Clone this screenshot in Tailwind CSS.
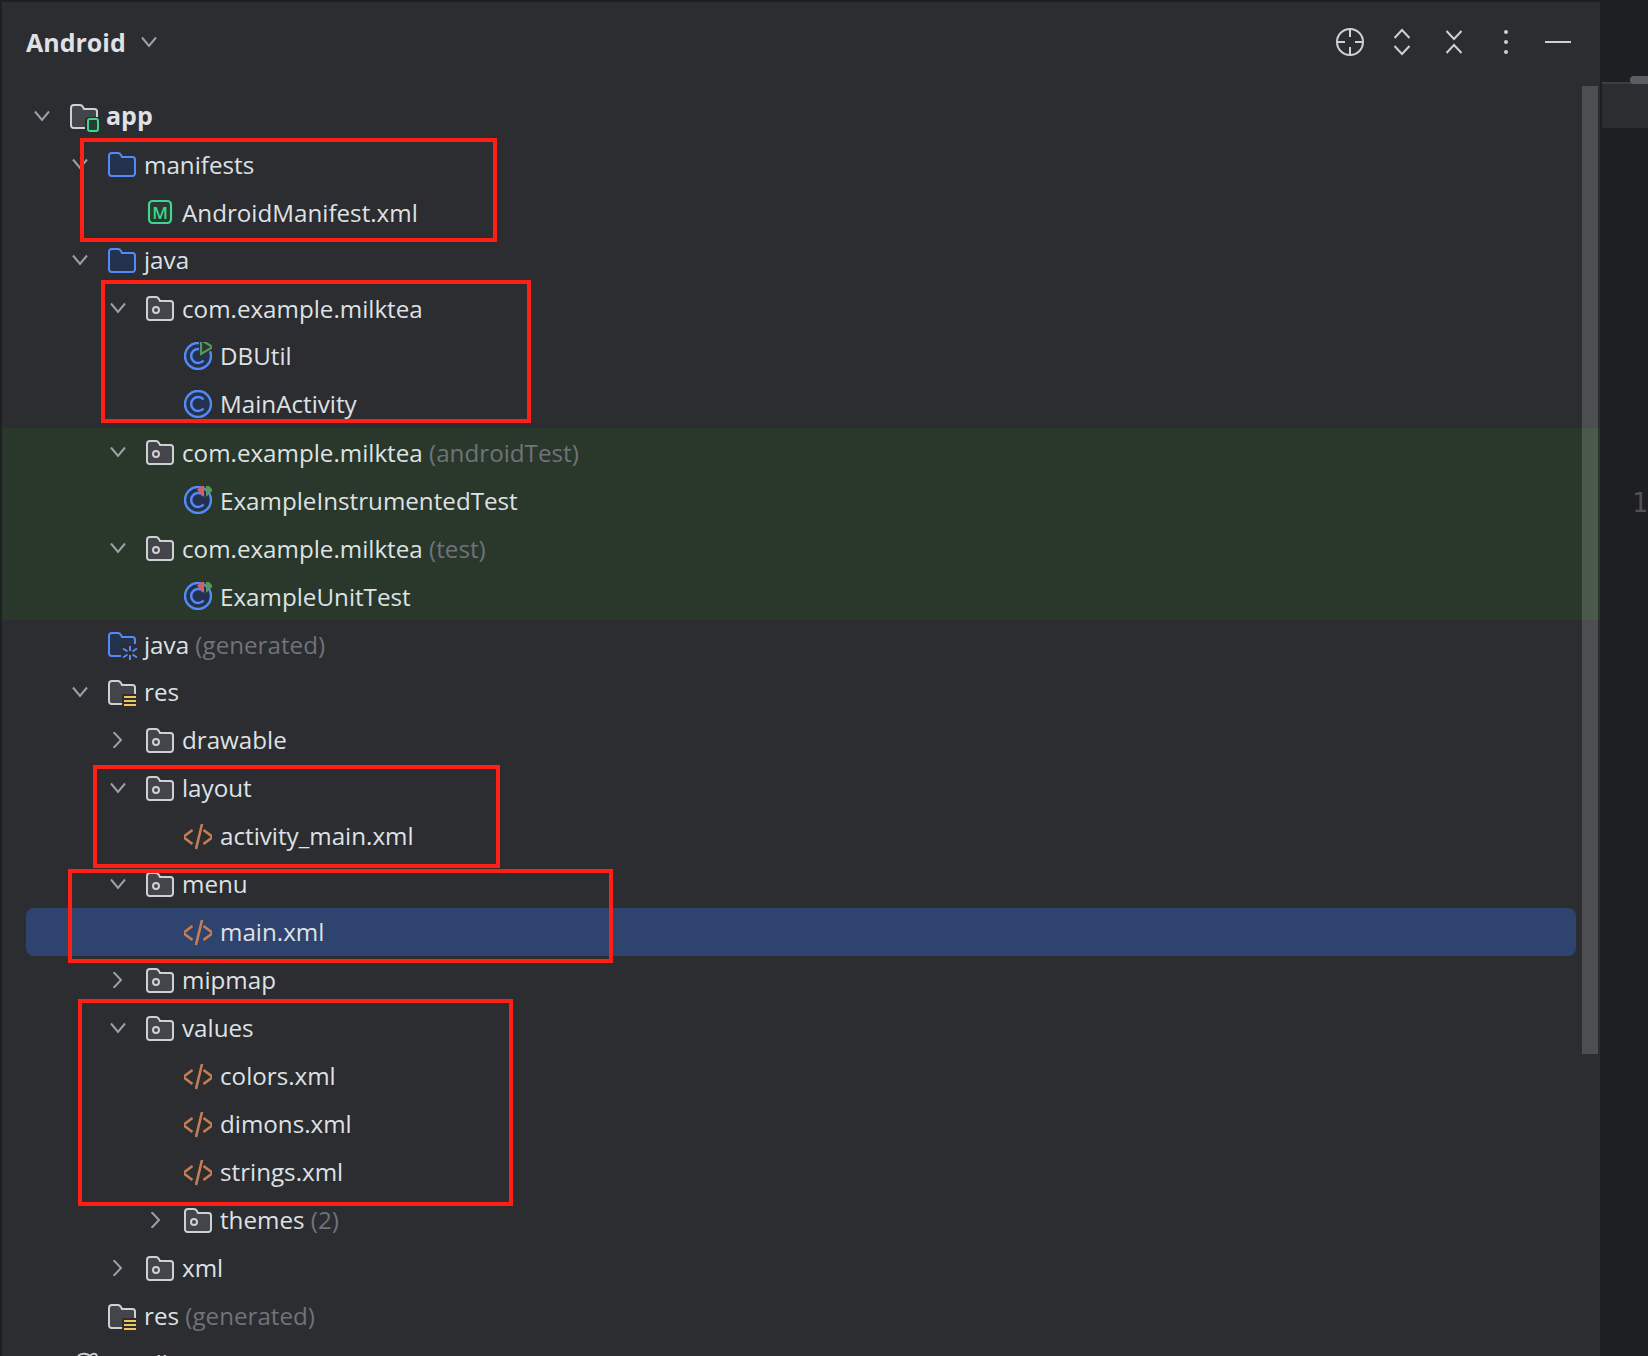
<!doctype html>
<html lang="en">
  <head>
    <meta charset="UTF-8" />
    <title>Project</title>
    <script src="https://cdn.jsdelivr.net/npm/@tailwindcss/browser@4"></script>
  </head>
  <body class="relative h-[1356px] w-[1648px] overflow-hidden bg-[#1e1f22] font-['Open_Sans',sans-serif] text-[24.2px] text-[#dfe1e5]">
    <svg class="hidden">
      <symbol id="chev-down" viewBox="0 0 16 16" overflow="visible"><path d="M1 3.500 8 12 15 3.500" fill="none" stroke="#9da0a8" stroke-width="2" /></symbol>
      <symbol id="chev-right" viewBox="0 0 16 16" overflow="visible"><path d="M3.500 0 11 8 3.500 16" fill="none" stroke="#9da0a8" stroke-width="2" /></symbol>
      <symbol id="folder-blue" viewBox="0 0 28 28" overflow="visible"><path d="M4 3H10C11 3 12 3.500 13 5L14 7H24.500A2.500 2.500 0 0 1 27 9.500V23.500A2.500 2.500 0 0 1 24.500 26H3.500A2.500 2.500 0 0 1 1 23.500V6A3 3 0 0 1 4 3Z" fill="#25324d" stroke="#548af7" stroke-width="2" /></symbol>
      <symbol id="folder-gray" viewBox="0 0 28 28" overflow="visible"><path d="M4 3H10C11 3 12 3.500 13 5L14 7H24.500A2.500 2.500 0 0 1 27 9.500V23.500A2.500 2.500 0 0 1 24.500 26H3.500A2.500 2.500 0 0 1 1 23.500V6A3 3 0 0 1 4 3Z" fill="#43454a" stroke="#ced0d6" stroke-width="2" /></symbol>
      <symbol id="package" viewBox="0 0 28 28" overflow="visible"><use href="#folder-gray" width="28" height="28" /><circle cx="10" cy="16" r="3" fill="none" stroke="#ced0d6" stroke-width="2" /></symbol>
      <symbol id="class" viewBox="0 0 28 28" overflow="visible"><circle cx="14" cy="14" r="13" fill="#25324d" stroke="#548af7" stroke-width="2.500" /><path d="M19.500 9.500A7 7 0 1 0 19.500 18.500" fill="none" stroke="#548af7" stroke-width="2.500" /></symbol>
      <symbol id="class-run" viewBox="0 0 28 28" overflow="visible"><use href="#class" width="28" height="28" /><path d="M16.500 -3 30 5 16.500 13Z" fill="#2b3a2d" stroke="#2b2d30" stroke-width="3" /><path d="M17 -2 29 5 17 12Z" fill="#2b3a2d" stroke="#57965c" stroke-width="2.200" /></symbol>
      <symbol id="class-test" viewBox="0 0 28 28" overflow="visible"><use href="#class" width="28" height="28" /><path d="M20 -3 13 4 20 11Z" fill="#db5c5c" /><path d="M22 -3 29 4 22 11Z" fill="#57965c" /></symbol>
      <symbol id="xml" viewBox="0 0 28 28" overflow="visible"><path d="M8.500 8 -1 15 8.500 22M19.500 8 29 15 19.500 22M18 2 12 27" fill="none" stroke="#c77d55" stroke-width="2.600" /></symbol>
      <symbol id="manifest" viewBox="0 0 28 28" overflow="visible"><rect x="3" y="3" width="22" height="22" rx="3.500" fill="#2a3a33" stroke="#3dd68c" stroke-width="2.200" /><text x="14" y="20.500" text-anchor="middle" font-size="17" font-weight="600" fill="#3dd68c">M</text></symbol>
      <symbol id="yellow-lines" viewBox="0 0 28 28" overflow="visible"><rect x="14" y="16" width="18" height="16" fill="#2b2d30" /><path d="M16 19H30M16 23H30M16 27H30" stroke="#f2c55c" stroke-width="2" /></symbol>
    </svg>

    <!-- tool window -->
    <div class="absolute top-[2px] bottom-0 left-[2px] w-[1598px] overflow-hidden bg-[#2b2d30]">
      <header class="flex h-[80px] items-center justify-between pr-4 pl-6">
        <div class="flex items-center gap-[15px]">
          <span class="translate-y-[1px] text-[25px] font-bold">Android</span>
          <svg class="h-4 w-4"><use href="#chev-down" /></svg>
        </div>
        <div class="flex items-center text-[#ced0d6]">
          <button class="flex w-[52px] justify-center">
            <svg class="h-7 w-7" viewBox="0 0 28 28" fill="none" stroke="#ced0d6" stroke-width="2"><circle cx="14" cy="14" r="13" /><path d="M14 1V9M14 19V27M1 14H9M19 14H27" /></svg>
          </button>
          <button class="flex w-[52px] justify-center">
            <svg class="h-7 w-4" viewBox="0 0 16 28" fill="none" stroke="#ced0d6" stroke-width="2"><path d="M0.500 10 8 2 15.500 10M0.500 18 8 26 15.500 18" /></svg>
          </button>
          <button class="flex w-[52px] justify-center">
            <svg class="h-7 w-4" viewBox="0 0 16 28" fill="none" stroke="#ced0d6" stroke-width="2"><path d="M0.500 3 8 11 15.500 3M0.500 25 8 17 15.500 25" /></svg>
          </button>
          <button class="flex w-[52px] justify-center">
            <svg class="h-7 w-1" viewBox="0 0 4 28" fill="#ced0d6"><circle cx="2" cy="4" r="2" /><circle cx="2" cy="14" r="2" /><circle cx="2" cy="24" r="2" /></svg>
          </button>
          <button class="flex w-[52px] justify-center">
            <span class="h-[2px] w-[26px] bg-[#ced0d6]"></span>
          </button>
        </div>
      </header>

      <ul class="mt-[10px] flex flex-col">
        <li class="flex h-12 items-center pl-[32px]">
          <svg class="mr-5 h-4 w-4"><use href="#chev-down" /></svg>
          <span class="relative mr-2 h-7 w-7">
            <svg class="h-7 w-7"><use href="#folder-gray" /></svg>
            <span class="absolute top-[15px] left-[15px] h-[17px] w-[15px] rounded-[3px] bg-[#2b2d30]"></span>
            <span class="absolute top-[16px] left-[17px] h-[14px] w-[12px] rounded-[3px] border-2 border-[#3dd68c] bg-[#2b3a33]"></span>
          </span>
          <span class="text-[25px] font-bold">app</span>
        </li>
        <li class="flex h-12 items-center pl-[70px]">
          <svg class="mr-5 h-4 w-4"><use href="#chev-down" /></svg>
          <svg class="mr-2 h-7 w-7"><use href="#folder-blue" /></svg>
          <span class="translate-y-[1px]">manifests</span>
        </li>
        <li class="flex h-12 items-center pl-[144px]">
          <svg class="mr-2 h-7 w-7"><use href="#manifest" /></svg>
          <span class="translate-y-[1px]">AndroidManifest.xml</span>
        </li>
        <li class="flex h-12 items-center pl-[70px]">
          <svg class="mr-5 h-4 w-4"><use href="#chev-down" /></svg>
          <svg class="mr-2 h-7 w-7"><use href="#folder-blue" /></svg>
          <span>java</span>
        </li>
        <li class="flex h-12 items-center pl-[108px]">
          <svg class="mr-5 h-4 w-4"><use href="#chev-down" /></svg>
          <svg class="mr-2 h-7 w-7"><use href="#package" /></svg>
          <span class="translate-y-[1px]">com.example.milktea</span>
        </li>
        <li class="flex h-12 items-center pl-[182px]">
          <svg class="mr-2 h-7 w-7"><use href="#class-run" /></svg>
          <span>DBUtil</span>
        </li>
        <li class="flex h-12 items-center pl-[182px]">
          <svg class="mr-2 h-7 w-7"><use href="#class" /></svg>
          <span>MainActivity</span>
        </li>
        <li class="flex h-12 items-center bg-[#29382a] pl-[108px]">
          <svg class="mr-5 h-4 w-4"><use href="#chev-down" /></svg>
          <svg class="mr-2 h-7 w-7"><use href="#package" /></svg>
          <span class="translate-y-[1px]">com.example.milktea <span class="text-[#6f737a]">(androidTest)</span></span>
        </li>
        <li class="flex h-12 items-center bg-[#29382a] pl-[182px]">
          <svg class="mr-2 h-7 w-7"><use href="#class-test" /></svg>
          <span class="translate-y-[1px]">ExampleInstrumentedTest</span>
        </li>
        <li class="flex h-12 items-center bg-[#29382a] pl-[108px]">
          <svg class="mr-5 h-4 w-4"><use href="#chev-down" /></svg>
          <svg class="mr-2 h-7 w-7"><use href="#package" /></svg>
          <span class="translate-y-[1px]">com.example.milktea <span class="text-[#6f737a]">(test)</span></span>
        </li>
        <li class="flex h-12 items-center bg-[#29382a] pl-[182px]">
          <svg class="mr-2 h-7 w-7"><use href="#class-test" /></svg>
          <span class="translate-y-[1px]">ExampleUnitTest</span>
        </li>
        <li class="flex h-12 items-center pl-[106px]">
          <span class="relative mr-2 h-7 w-7">
            <svg class="h-7 w-7"><use href="#folder-blue" /></svg>
            <span class="absolute top-[14px] left-[13px] h-[18px] w-[18px] rounded-[3px] bg-[#2b2d30]"></span>
            <svg class="absolute top-[16px] left-[14px] h-[14px] w-[16px]" viewBox="0 0 16 14" fill="none" stroke="#548af7" stroke-width="2"><path d="M8 0V5M8 9V14M1 2.500 5.500 5.500M10.500 8.500 15 11.500M15 2.500 10.500 5.500M5.500 8.500 1 11.500" /></svg>
          </span>
          <span class="translate-y-[1px]">java <span class="text-[#6f737a]">(generated)</span></span>
        </li>
        <li class="flex h-12 items-center pl-[70px]">
          <svg class="mr-5 h-4 w-4"><use href="#chev-down" /></svg>
          <span class="relative mr-2 h-7 w-7">
            <svg class="h-7 w-7"><use href="#folder-gray" /></svg>
            <svg class="absolute top-0 left-0 h-7 w-7"><use href="#yellow-lines" /></svg>
          </span>
          <span>res</span>
        </li>
        <li class="flex h-12 items-center pl-[108px]">
          <svg class="mr-5 h-4 w-4"><use href="#chev-right" /></svg>
          <svg class="mr-2 h-7 w-7"><use href="#package" /></svg>
          <span>drawable</span>
        </li>
        <li class="flex h-12 items-center pl-[108px]">
          <svg class="mr-5 h-4 w-4"><use href="#chev-down" /></svg>
          <svg class="mr-2 h-7 w-7"><use href="#package" /></svg>
          <span>layout</span>
        </li>
        <li class="flex h-12 items-center pl-[182px]">
          <svg class="mr-2 h-7 w-7"><use href="#xml" /></svg>
          <span>activity_main.xml</span>
        </li>
        <li class="flex h-12 items-center pl-[108px]">
          <svg class="mr-5 h-4 w-4"><use href="#chev-down" /></svg>
          <svg class="mr-2 h-7 w-7"><use href="#package" /></svg>
          <span>menu</span>
        </li>
        <li class="mr-6 ml-6 flex h-12 items-center rounded-lg bg-[#2e436e] pl-[158px]">
          <svg class="mr-2 h-7 w-7"><use href="#xml" /></svg>
          <span>main.xml</span>
        </li>
        <li class="flex h-12 items-center pl-[108px]">
          <svg class="mr-5 h-4 w-4"><use href="#chev-right" /></svg>
          <svg class="mr-2 h-7 w-7"><use href="#package" /></svg>
          <span>mipmap</span>
        </li>
        <li class="flex h-12 items-center pl-[108px]">
          <svg class="mr-5 h-4 w-4"><use href="#chev-down" /></svg>
          <svg class="mr-2 h-7 w-7"><use href="#package" /></svg>
          <span>values</span>
        </li>
        <li class="flex h-12 items-center pl-[182px]">
          <svg class="mr-2 h-7 w-7"><use href="#xml" /></svg>
          <span>colors.xml</span>
        </li>
        <li class="flex h-12 items-center pl-[182px]">
          <svg class="mr-2 h-7 w-7"><use href="#xml" /></svg>
          <span>dimons.xml</span>
        </li>
        <li class="flex h-12 items-center pl-[182px]">
          <svg class="mr-2 h-7 w-7"><use href="#xml" /></svg>
          <span>strings.xml</span>
        </li>
        <li class="flex h-12 items-center pl-[146px]">
          <svg class="mr-5 h-4 w-4"><use href="#chev-right" /></svg>
          <svg class="mr-2 h-7 w-7"><use href="#package" /></svg>
          <span>themes <span class="text-[#6f737a]">(2)</span></span>
        </li>
        <li class="flex h-12 items-center pl-[108px]">
          <svg class="mr-5 h-4 w-4"><use href="#chev-right" /></svg>
          <svg class="mr-2 h-7 w-7"><use href="#package" /></svg>
          <span>xml</span>
        </li>
        <li class="flex h-12 items-center pl-[106px]">
          <span class="relative mr-2 h-7 w-7">
            <svg class="h-7 w-7"><use href="#folder-gray" /></svg>
            <svg class="absolute top-0 left-0 h-7 w-7"><use href="#yellow-lines" /></svg>
          </span>
          <span>res <span class="text-[#6f737a]">(generated)</span></span>
        </li>
        <li class="flex h-12 items-center pl-[68px]">
          <svg class="mr-2 h-7 w-7" viewBox="0 0 28 28" fill="none" stroke="#ced0d6" stroke-width="2"><path d="M8 6C12 2 18 4 20 6C22 3 26 3 27 6" /></svg>
          <span>Gradle Scripts</span>
        </li>
      </ul>

      <!-- scrollbar -->
      <div class="absolute top-[84px] left-[1580px] h-[968px] w-4 bg-white/16"></div>
    </div>

    <!-- editor sliver on the right -->
    <div class="absolute top-[82px] left-[1602px] h-[46px] w-[46px] border-t-2 border-[#3c3e41] bg-[#2b2d30]"></div>
    <div class="absolute top-[76px] left-[1630px] h-2 w-[18px] rounded-l-full bg-[#5a5d63]"></div>
    <span class="absolute top-[484px] left-[1632px] font-['DejaVu_Sans_Mono',monospace] text-[26px] text-[#4e5157]">1</span>

    <!-- red annotation boxes -->
    <div class="absolute top-[138px] left-[80px] h-[104px] w-[417px] border-4 border-[#ff1f14]"></div>
    <div class="absolute top-[280px] left-[101px] h-[143px] w-[430px] border-4 border-[#ff1f14]"></div>
    <div class="absolute top-[765px] left-[93px] h-[103px] w-[407px] border-4 border-[#ff1f14]"></div>
    <div class="absolute top-[869px] left-[68px] h-[94px] w-[545px] border-4 border-[#ff1f14]"></div>
    <div class="absolute top-[999px] left-[78px] h-[207px] w-[435px] border-4 border-[#ff1f14]"></div>
  </body>
</html>
